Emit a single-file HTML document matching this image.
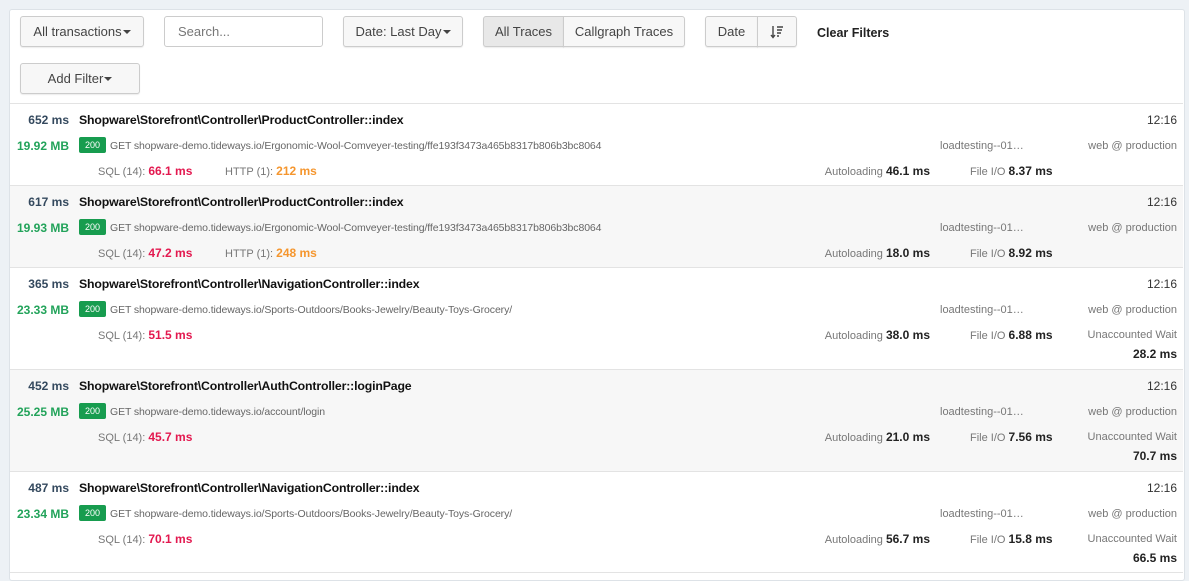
<!DOCTYPE html><html><head><meta charset="utf-8"><style>
body{margin:0;width:1189px;height:574px;background:#edf1f5;font-family:"Liberation Sans",sans-serif;position:relative;overflow:hidden}
.panel{position:absolute;left:9px;top:9px;width:1174px;height:570px;background:#fff;border:1px solid #dde2e7;border-radius:3px}
.b{position:absolute;height:31px;border:1px solid #ccc;border-radius:3px;background:#f7f7f7;font-size:13px;color:#444;display:flex;align-items:center;justify-content:center;box-sizing:border-box;box-shadow:0 1px 1px rgba(0,0,0,.08)}
.car{display:inline-block;border-left:4px solid transparent;border-right:4px solid transparent;border-top:4px solid #444;margin-left:1px;vertical-align:middle}
.row{position:absolute;left:10px;width:1173px;border-top:1px solid #e3e3e3;box-sizing:border-box}
.row div,.row span.a{position:absolute;white-space:nowrap;line-height:16px}
.ms{right:1114px;font-size:12px;font-weight:bold;color:#34495e}
.mb{right:1114px;font-size:12px;font-weight:bold;color:#22a35a}
.t{left:69px;font-size:12.3px;font-weight:bold;color:#111;letter-spacing:-.15px}
.bd{left:69px;width:27px;height:16px;background:#179c4f;color:#fff;font-size:9px;text-align:center;border-radius:2px}
.u{left:100px;font-size:10.5px;color:#666;letter-spacing:-.1px}
.g{color:#777;font-size:11px}
.sq{color:#e3184f;font-weight:bold;font-size:12px}
.ht{color:#f5962e;font-weight:bold;font-size:12px}
.k{color:#222;font-weight:bold;font-size:12px}
.r{right:6px;text-align:right}
</style></head><body>
<div class="panel"></div>
<div class="b" style="left:20px;top:16px;width:124px">All transactions<span class="car"></span></div>
<div class="b" style="left:164px;top:16px;width:159px;background:#fff;box-shadow:none;justify-content:flex-start;padding-left:13px;color:#777">Search...</div>
<div class="b" style="left:343px;top:16px;width:120px">Date: Last Day<span class="car"></span></div>
<div class="b" style="left:483px;top:16px;width:81px;background:#e8e8e8;border-radius:3px 0 0 3px">All Traces</div>
<div class="b" style="left:563px;top:16px;width:122px;border-radius:0 3px 3px 0">Callgraph Traces</div>
<div class="b" style="left:705px;top:16px;width:53px;border-radius:3px 0 0 3px">Date</div>
<div class="b" style="left:757px;top:16px;width:40px;border-radius:0 3px 3px 0"><svg width="14" height="14" viewBox="0 0 14 14"><path d="M3 1v11M1 10l2 2.5 2-2.5M7 2h6M7 5h5M7 8h4M7 11h2" stroke="#444" stroke-width="1.4" fill="none"/></svg></div>
<div style="position:absolute;left:817px;top:26px;font-size:12.5px;font-weight:bold;color:#222">Clear Filters</div>
<div class="b" style="left:20px;top:63px;width:120px">Add Filter<span class="car"></span></div>

<div class="row" style="top:103px;height:82px;background:#fff">
<div class="ms" style="top:8px">652 ms</div><div class="t" style="top:8px">Shopware\Storefront\Controller\ProductController::index</div><div class="r" style="top:8px;font-size:12px;color:#333">12:16</div>
<div class="mb" style="top:34px">19.92 MB</div><div class="bd" style="top:33px">200</div><div class="u" style="top:34px">GET shopware-demo.tideways.io/Ergonomic-Wool-Comveyer-testing/ffe193f3473a465b8317b806b3bc8064</div>
<div class="g" style="top:34px;left:930px">loadtesting--01…</div><div class="g r" style="top:34px">web @ production</div>
<div style="top:59px;left:88px"><span class="g">SQL (14): </span><span class="sq">66.1 ms</span></div><div style="top:59px;left:215px"><span class="g">HTTP (1): </span><span class="ht">212 ms</span></div>
<div style="top:59px;right:253px"><span class="g">Autoloading </span><span class="k">46.1 ms</span></div><div style="top:59px;left:960px"><span class="g">File I/O </span><span class="k">8.37 ms</span></div>
</div>

<div class="row" style="top:185px;height:82px;background:#f7f7f7">
<div class="ms" style="top:8px">617 ms</div><div class="t" style="top:8px">Shopware\Storefront\Controller\ProductController::index</div><div class="r" style="top:8px;font-size:12px;color:#333">12:16</div>
<div class="mb" style="top:34px">19.93 MB</div><div class="bd" style="top:33px">200</div><div class="u" style="top:34px">GET shopware-demo.tideways.io/Ergonomic-Wool-Comveyer-testing/ffe193f3473a465b8317b806b3bc8064</div>
<div class="g" style="top:34px;left:930px">loadtesting--01…</div><div class="g r" style="top:34px">web @ production</div>
<div style="top:59px;left:88px"><span class="g">SQL (14): </span><span class="sq">47.2 ms</span></div><div style="top:59px;left:215px"><span class="g">HTTP (1): </span><span class="ht">248 ms</span></div>
<div style="top:59px;right:253px"><span class="g">Autoloading </span><span class="k">18.0 ms</span></div><div style="top:59px;left:960px"><span class="g">File I/O </span><span class="k">8.92 ms</span></div>
</div>

<div class="row" style="top:267px;height:102px;background:#fff">
<div class="ms" style="top:8px">365 ms</div><div class="t" style="top:8px">Shopware\Storefront\Controller\NavigationController::index</div><div class="r" style="top:8px;font-size:12px;color:#333">12:16</div>
<div class="mb" style="top:34px">23.33 MB</div><div class="bd" style="top:33px">200</div><div class="u" style="top:34px">GET shopware-demo.tideways.io/Sports-Outdoors/Books-Jewelry/Beauty-Toys-Grocery/</div>
<div class="g" style="top:34px;left:930px">loadtesting--01…</div><div class="g r" style="top:34px">web @ production</div>
<div style="top:59px;left:88px"><span class="g">SQL (14): </span><span class="sq">51.5 ms</span></div>
<div style="top:59px;right:253px"><span class="g">Autoloading </span><span class="k">38.0 ms</span></div><div style="top:59px;left:960px"><span class="g">File I/O </span><span class="k">6.88 ms</span></div>
<div class="g r" style="top:59px">Unaccounted Wait</div><div class="k r" style="top:78px">28.2 ms</div>
</div>

<div class="row" style="top:369px;height:102px;background:#f7f7f7">
<div class="ms" style="top:8px">452 ms</div><div class="t" style="top:8px">Shopware\Storefront\Controller\AuthController::loginPage</div><div class="r" style="top:8px;font-size:12px;color:#333">12:16</div>
<div class="mb" style="top:34px">25.25 MB</div><div class="bd" style="top:33px">200</div><div class="u" style="top:34px">GET shopware-demo.tideways.io/account/login</div>
<div class="g" style="top:34px;left:930px">loadtesting--01…</div><div class="g r" style="top:34px">web @ production</div>
<div style="top:59px;left:88px"><span class="g">SQL (14): </span><span class="sq">45.7 ms</span></div>
<div style="top:59px;right:253px"><span class="g">Autoloading </span><span class="k">21.0 ms</span></div><div style="top:59px;left:960px"><span class="g">File I/O </span><span class="k">7.56 ms</span></div>
<div class="g r" style="top:59px">Unaccounted Wait</div><div class="k r" style="top:78px">70.7 ms</div>
</div>

<div class="row" style="top:471px;height:102px;background:#fff;border-bottom:1px solid #e3e3e3">
<div class="ms" style="top:8px">487 ms</div><div class="t" style="top:8px">Shopware\Storefront\Controller\NavigationController::index</div><div class="r" style="top:8px;font-size:12px;color:#333">12:16</div>
<div class="mb" style="top:34px">23.34 MB</div><div class="bd" style="top:33px">200</div><div class="u" style="top:34px">GET shopware-demo.tideways.io/Sports-Outdoors/Books-Jewelry/Beauty-Toys-Grocery/</div>
<div class="g" style="top:34px;left:930px">loadtesting--01…</div><div class="g r" style="top:34px">web @ production</div>
<div style="top:59px;left:88px"><span class="g">SQL (14): </span><span class="sq">70.1 ms</span></div>
<div style="top:59px;right:253px"><span class="g">Autoloading </span><span class="k">56.7 ms</span></div><div style="top:59px;left:960px"><span class="g">File I/O </span><span class="k">15.8 ms</span></div>
<div class="g r" style="top:59px">Unaccounted Wait</div><div class="k r" style="top:78px">66.5 ms</div>
</div>
</body></html>
